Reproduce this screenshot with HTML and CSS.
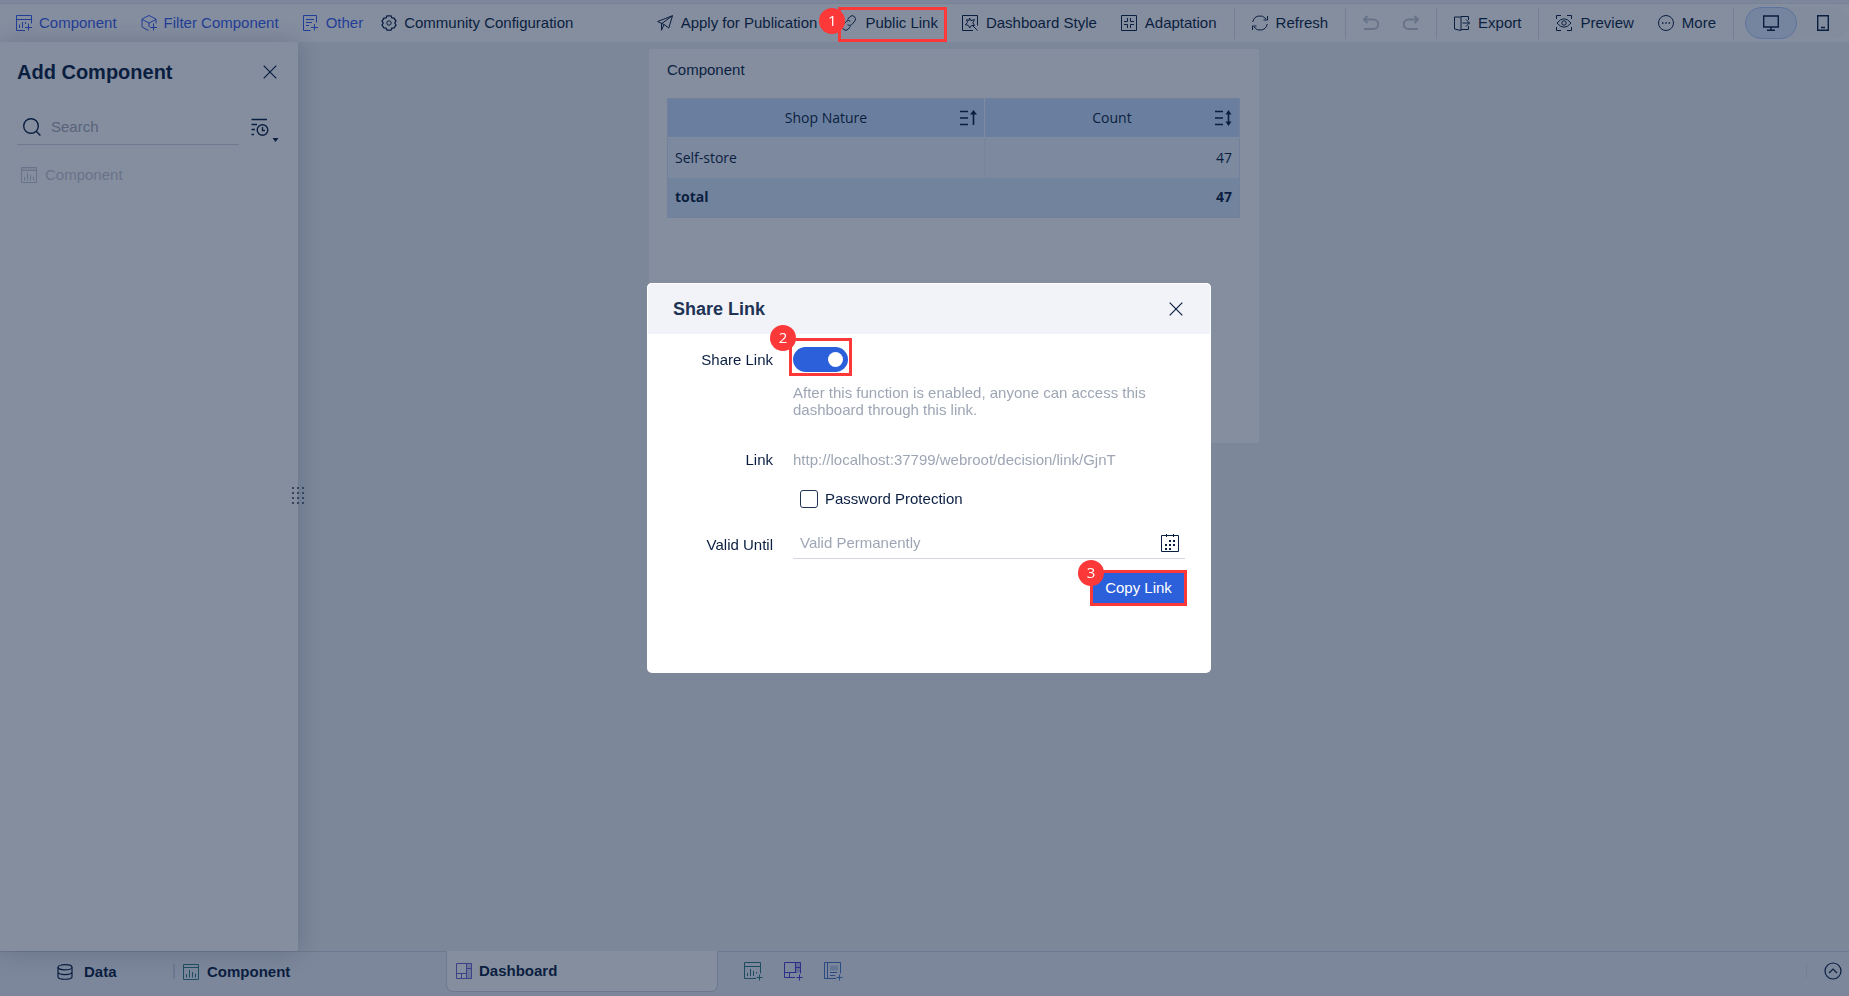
FILE: index.html
```html
<!DOCTYPE html>
<html lang="en">
<head>
<meta charset="utf-8">
<title>Dashboard</title>
<link rel="stylesheet" href="styles.css">
</head>
<body>
<div class="app">
  <div class="strip"></div>
  <header class="toolbar">
    <div class="group">
      <button class="tool blue"><svg class="icon" viewBox="0 0 16 16"><path d="M9 15.500H.5V.5h15v8M.5 4.500h15M3.500 13V9.500M6.500 13V7M9.500 9V7M12.500 8.500v7M9 12.500h7"/></svg>Component</button>
      <button class="tool blue"><svg class="icon" viewBox="0 0 16 16"><path d="M7.500 15.500L1 12V4L8 .5 15 4v4.500M1 4.500L8 8l7-3.500M8 8v4M12.500 8.500v7M9 12.500h7"/></svg>Filter Component</button>
      <button class="tool blue last"><svg class="icon" viewBox="0 0 16 16"><path d="M7.500 15.500H.5V.5h13v7M3 4.500h8M3 7.500h6M3 10.500h3M11.500 9v6.500M8 12.500h7"/></svg>Other</button>
      <button class="tool last"><svg class="icon" viewBox="0 0 16 16"><path stroke-width="1.300" d="M6 .8h4l.9 2 2.200.3 1.900 3-1.200 1.900L15 10l-1.900 2.900-2.200.3-.9 2H6l-.9-2-2.200-.3L1 10l1.200-2L1 6.100l1.900-3 2.200-.3z"/><circle cx="8" cy="8" r="2.200"/></svg>Community Configuration</button>
    </div>
    <div class="group">
      <button class="tool"><svg class="icon" viewBox="0 0 16 16"><path d="M.7 6.500L15.500.7 11.800 13 7 9.500zM15.500.7L4.500 8.700v6.500L7 9.500"/></svg>Apply for Publication</button>
      <button class="tool"><svg class="icon" viewBox="0 0 16 16"><path d="M6.500 4.500l2.300-2.700a3.300 3.300 0 0 1 5 4.300l-3 3.400a3 3 0 0 1-4.200.2M9.500 11.500l-2.300 2.700a3.300 3.300 0 0 1-5-4.300l3-3.400a3 3 0 0 1 4.200-.2"/></svg>Public Link<span class="frame frame-link"><span class="mark">1</span></span></button>
      <button class="tool"><svg class="icon" viewBox="0 0 16 16"><path d="M11 15.500H.5V.5h15v10M7.500 3l1.300 2.600 3.700-1-1.700 3.200 1.700 2.700-3.200.1-1.500 2.400-1.500-2.700-3-.6 2.200-2.100-.8-3 2.400.9zM11 11l4.500 4.500"/></svg>Dashboard Style</button>
      <button class="tool last"><svg class="icon" viewBox="0 0 16 16"><path d="M.5.5h15v15H.5zM6.500 3v3.500H3M9.500 3v3.500H13M6.500 13V9.500H3M9.500 13V9.500H13"/></svg>Adaptation</button>
      <span class="sep"></span>
      <button class="tool solo"><svg class="icon" viewBox="0 0 16 16"><path d="M.8 7A7.300 7.300 0 0 1 14 4M15.200 9A7.300 7.300 0 0 1 2 12M15.500 1v4h-4M.5 15v-4h4"/></svg>Refresh</button>
      <span class="sep"></span>
      <button class="tool faded first" aria-label="Undo"><svg class="icon thick" viewBox="0 0 16 16"><path d="M4.500 1L1 4.500 4.500 8M1 4.500h9.500a4.500 4.500 0 0 1 0 9.500H1"/></svg></button>
      <button class="tool faded last" aria-label="Redo"><svg class="icon thick" viewBox="0 0 16 16"><path d="M11.500 1L15 4.500 11.500 8M15 4.500H5.500a4.500 4.500 0 0 0 0 9.500H15"/></svg></button>
      <span class="sep"></span>
      <button class="tool solo"><svg class="icon" viewBox="0 0 16 16"><path d="M7 2H.5v12L7 15.500zM7 1.500h7.500V5M7 14.500h7.500V11M8.500 8h7M12 4.500L15.500 8 12 11.500"/></svg>Export</button>
      <span class="sep"></span>
      <button class="tool first"><svg class="icon" viewBox="0 0 16 16"><path d="M.5 4V.5H5M11 .5h4.500V4M.5 12v3.500H5M11 15.500h4.500V12M1 8q7-8.500 14 0-7 8.500-14 0z"/><circle cx="8" cy="8" r="2.200"/></svg>Preview</button>
      <button class="tool last"><svg class="icon" viewBox="0 0 16 16"><circle cx="8" cy="8" r="7.500"/><path class="dots" d="M4 7.300h1.500v1.500H4zM7.300 7.300h1.500v1.500H7.300zM10.600 7.300h1.500v1.500h-1.500z"/></svg>More</button>
      <span class="sep"></span>
      <div class="switcher">
        <button class="device active" aria-label="Desktop"><svg class="icon bold" viewBox="0 0 16 16"><path d="M.7 1h14.600v11H.7zM8 12v3M4 15.200h8"/></svg></button>
        <button class="device" aria-label="Mobile"><svg class="icon bold" viewBox="0 0 16 16"><path d="M2.700.7h10.600v14.600H2.700zM6 12.500h4"/></svg></button>
      </div>
    </div>
  </header>

  <main class="workspace">
    <aside class="sidebar">
      <div class="side-head">
        <h2 class="side-title">Add Component</h2>
        <button class="close" aria-label="Close panel"><svg class="cross" viewBox="0 0 14 14"><path d="M.7.7l12.600 12.600M13.300.7L.7 13.300"/></svg></button>
      </div>
      <div class="search-row">
        <label class="search"><svg class="lens" viewBox="0 0 18 18"><circle cx="8" cy="8" r="7.300"/><path d="M13.200 13.200l4.200 4.200"/></svg><input class="search-input" type="text" placeholder="Search" aria-label="Search"></label>
        <button class="sort" aria-label="Sort by time"><svg class="sort-icon" viewBox="0 0 28 24"><path d="M.5 1.500H16M.5 6.500H6M.5 11.500H4M.5 16.500H3"/><circle cx="11.500" cy="12" r="5.300"/><path d="M11.500 9v3.500H14"/><path class="fill" d="M21.500 20h6l-3 4z"/></svg></button>
      </div>
      <div class="item"><svg class="icon" viewBox="0 0 16 16"><path class="tint" d="M.5.5h15v3H.5z"/><path d="M.5.5h15v15H.5zM.5 3.500h15M3.500 13.500V10M6.500 13.500V6M9.500 13.500V8M12.500 13.500v-4"/></svg>Component</div>
      <svg class="grip" viewBox="0 0 12 18"><path d="M0 1h2M5 1h2M10 1h2M0 6h2M5 6h2M10 6h2M0 11h2M5 11h2M10 11h2M0 16h2M5 16h2M10 16h2"/></svg>
    </aside>
    <section class="canvas">
      <article class="card">
        <h3 class="card-title">Component</h3>
        <table class="data">
          <colgroup><col class="col-name"><col></colgroup>
          <thead>
            <tr>
              <th>Shop Nature<svg class="order" viewBox="0 0 17 16"><path d="M0 1.500h8M0 8h8M0 14.500h8M13.500 15V3"/><path class="fill" d="M10 4.500L13.500 0 17 4.500z"/></svg></th>
              <th>Count<svg class="order" viewBox="0 0 17 16"><path d="M0 1.500h8M0 8h8M0 14.500h8M13.500 13V3"/><path class="fill" d="M10.500 4.500l3-4.500 3 4.500zM10.500 11.500l3 4.500 3-4.500z"/></svg></th>
            </tr>
          </thead>
          <tbody>
            <tr><td>Self-store</td><td class="num">47</td></tr>
            <tr class="total"><td>total</td><td class="num">47</td></tr>
          </tbody>
        </table>
      </article>
    </section>
  </main>

  <footer class="tabs">
    <button class="tab tab-data"><svg class="icon" viewBox="0 0 16 16"><g stroke-width="1.200"><ellipse cx="8" cy="3.300" rx="7" ry="2.600"/><path d="M1 3.300v9.400c0 3.400 14 3.400 14 0V3.300M1 8c0 3.400 14 3.400 14 0"/></g></svg>Data</button>
    <button class="tab tab-component"><svg class="icon teal" viewBox="0 0 16 16"><path d="M.5.5h15v15H.5zM.5 3.500h15M3.500 13.500V10M6.500 13.500V6M9.500 13.500V8M12.500 13.500v-4"/></svg>Component</button>
    <button class="tab tab-dashboard"><svg class="icon violet" viewBox="0 0 16 16"><path class="tint" d="M10.500.5h5v15h-5z"/><path d="M.5.5h15v15H.5zM.5 10.500h10M10.500.5v15M10.500 5.500h5M5.500 10.500v5"/></svg>Dashboard</button>
    <div class="adders">
      <button class="add" aria-label="Add component"><svg class="add-icon teal" viewBox="0 0 19 19"><path d="M12 16.500H.5V.5h16v11M.5 4.500h16M3.500 14v-3M6.500 14V7M9.500 14V9M12.500 11.500V10M15.500 12.500v6M12.500 15.500h6"/></svg></button>
      <button class="add" aria-label="Add dashboard"><svg class="add-icon indigo" viewBox="0 0 19 19"><path class="tint" d="M11.500.5h5v10h-5z"/><path d="M11 15.500H.5V.5h16v11M.5 10.500h12M11.500.5v10M11.500 5.500h5M5.500 10.500v5M15.500 12.500v6M12.500 15.500h6"/></svg></button>
      <button class="add" aria-label="Add report"><svg class="add-icon steel" viewBox="0 0 19 19"><path class="tint" d="M6 3.500h8v5H6z"/><path d="M12 16.500H.5V.5h16v11M3.500.5v16M6 10.500h7M6 13.500h5M15.500 12.500v6M12.500 15.500h6"/></svg></button>
    </div>
    <button class="expand" aria-label="Expand"><svg class="expand-icon" viewBox="0 0 18 18"><circle cx="9" cy="9" r="8"/><path d="M5 11l4-4 4 4"/></svg></button>
  </footer>
</div>

<div class="backdrop">
  <section class="dialog" role="dialog" aria-labelledby="dialog-title">
    <header class="dialog-head">
      <h1 class="dialog-title" id="dialog-title">Share Link</h1>
      <button class="close" aria-label="Close dialog"><svg class="cross" viewBox="0 0 14 14"><path d="M.7.7l12.600 12.600M13.300.7L.7 13.300"/></svg></button>
    </header>
    <div class="form">
      <label class="label" for="share">Share Link</label>
      <div class="field"><span class="toggle-wrap"><input class="toggle" id="share" type="checkbox" role="switch" checked><span class="frame frame-toggle"><span class="mark">2</span></span></span></div>
      <p class="help">After this function is enabled, anyone can access this dashboard through this link.</p>
      <span class="label">Link</span>
      <span class="url">http://localhost:37799/webroot/decision/link/GjnT</span>
      <label class="check"><input class="box" type="checkbox">Password Protection</label>
      <label class="label label-date" for="valid">Valid Until</label>
      <div class="date"><input class="date-input" id="valid" type="text" placeholder="Valid Permanently"><svg class="calendar" viewBox="0 0 18 18"><path d="M.5 1.500h17v16H.5zM5.500 0v3M12.500 0v3"/><path class="fill" d="M8 6h2v2H8zM12 6h2v2h-2zM4 10h2v2H4zM8 10h2v2H8zM12 10h2v2h-2zM4 14h2v2H4zM8 14h2v2H8z"/></svg></div>
      <div class="actions"><button class="copy">Copy Link<span class="frame frame-copy"><span class="mark">3</span></span></button></div>
    </div>
  </section>
</div>
</body>
</html>
```
FILE: styles.css
```css
* { box-sizing: border-box; }
html, body { height: 100%; }
body {
  margin: 0;
  font: 15px/18px "Liberation Sans", Arial, sans-serif;
  color: #091e40;
  overflow: hidden;
}
button {
  font: inherit;
  color: inherit;
  background: none;
  border: 0;
  padding: 0;
}
input { font: inherit; color: inherit; }
svg { fill: none; stroke: currentColor; flex: none; display: block; }
svg .fill, svg .dots { fill: currentColor; stroke: none; }
svg .tint { fill: currentColor; fill-opacity: 0.3; stroke: none; }
.icon { width: 16px; height: 16px; }
.bold { stroke-width: 1.4; }
.thick { stroke-width: 2; }

.app {
  height: 100%;
  display: grid;
  grid-template-rows: 4px 38px 1fr 45px;
}
.strip { background: #edf0f6; border-bottom: 1px solid #e4e8ef; }

.toolbar {
  display: flex;
  justify-content: space-between;
  align-items: center;
  padding-left: 4px;
  background: #fff;
}
.group { display: flex; align-items: center; }
.tool {
  position: relative;
  display: flex;
  align-items: center;
  gap: 7px;
  height: 31px;
  padding: 0 12px;
  white-space: nowrap;
}
.group + .group .tool { gap: 8px; }
.tool.last { padding-right: 6px; }
.tool.first, .tool.solo { padding-left: 6px; }
.tool.solo { padding-right: 6px; }
.blue { color: #3a5eec; }
.faded { color: #c3c9d2; }
.sep { width: 1px; height: 31px; margin: 0 11px; background: #dde1e8; }
.switcher { display: flex; background: #f9fafb; border-radius: 16px; }
.device {
  width: 52px;
  height: 32px;
  display: flex;
  align-items: center;
  justify-content: center;
  border-radius: 16px;
}
.device.active { background: #dfecff; border: 1px solid #b3cbfa; }

.workspace { display: flex; min-height: 0; background: #eef1f5; }
.sidebar {
  position: relative;
  width: 298px;
  flex: none;
  padding: 17px 19px 0 17px;
  background: #fff;
  box-shadow: 0 0 24px rgba(9, 30, 64, 0.22);
}
.side-head { display: flex; justify-content: space-between; align-items: center; padding-right: 2px; }
.side-title { margin: 0; font-size: 20px; line-height: 26px; }
.close { display: flex; }
.cross { width: 14px; height: 14px; stroke-width: 1.2; }
.search-row { display: flex; align-items: center; gap: 12px; margin-top: 24px; }
.search {
  flex: 1;
  display: flex;
  align-items: center;
  gap: 10px;
  height: 36px;
  padding-left: 6px;
  border-bottom: 1px solid #d0d6e0;
}
.lens { width: 18px; height: 18px; stroke-width: 1.4; }
.search-input { width: 100%; min-width: 0; border: 0; padding: 0; outline: 0; background: none; }
.search-input::placeholder { color: #a3aab6; opacity: 1; }
.sort { padding-top: 6px; }
.sort-icon { width: 28px; height: 24px; stroke-width: 1.4; }
.item {
  display: flex;
  align-items: center;
  gap: 8px;
  margin-top: 21px;
  padding-left: 4px;
  color: #c3c9d2;
}
.grip {
  position: absolute;
  right: -6px;
  top: 49%;
  width: 12px;
  height: 18px;
  stroke-width: 2;
  color: #5c6a82;
}

.canvas { flex: 1; min-width: 0; display: flex; padding: 7px 0 0 351px; align-items: flex-start; }
.card { width: 610px; min-height: 394px; padding: 12px 19px 12px 18px; background: #fff; }
.card-title { margin: 0; font-size: 15px; font-weight: 400; line-height: 18px; }
.data {
  width: 100%;
  margin-top: 19px;
  table-layout: fixed;
  border-collapse: collapse;
  font: 14px/20px "Open Sans", "Noto Sans", sans-serif;
  border: 1px solid #d7e4f6;
}
.col-name { width: 317px; }
.data th, .data td { height: 40px; padding: 0 7px; }
.data th {
  position: relative;
  height: 39px;
  font-weight: 400;
  background: #c9e0fe;
  border-bottom: 1px solid #f4f8ff;
}
.data th + th { border-left: 1px solid #f4f8ff; }
.data td { background: #eff4fe; }
.data td + td { border-left: 1px solid #e4eaf6; }
.data .total td { background: #d9e9fa; font-weight: 700; border-color: #d9e9fa; }
.data .num { text-align: right; }
.order { position: absolute; right: 7px; top: 11px; width: 17px; height: 16px; stroke-width: 1.6; }

.tabs {
  display: flex;
  align-items: flex-start;
  background: #edf0f6;
  box-shadow: inset 0 1px #cdd4e0;
}
.tab { display: flex; align-items: center; gap: 7px; height: 41px; font-weight: 700; }
.tab-data { width: 173px; gap: 11px; padding-left: 57px; }
.tab-component { width: 273px; gap: 8px; }
.tab-component::before { content: ""; width: 2px; height: 15px; background: #cdd4e0; }
.tab-dashboard {
  width: 272px;
  padding-left: 9px;
  background: #fff;
  border: 1px solid #cdd4e0;
  border-top: 0;
  border-radius: 0 0 7px 7px;
}
.teal { color: #2f7a80; }
.violet { color: #6a66d0; }
.indigo { color: #4a41cf; }
.steel { color: #4d76c4; }
.adders { display: flex; align-items: center; gap: 21px; height: 41px; padding-left: 26px; }
.add-icon { width: 19px; height: 19px; }
.expand { display: flex; align-items: center; gap: 17px; height: 39px; margin-left: auto; padding-right: 7px; }
.expand::before { content: ""; width: 1px; height: 15px; background: #dde1e8; }
.expand-icon { width: 18px; height: 18px; stroke-width: 1.2; }

.backdrop {
  position: fixed;
  inset: 0;
  z-index: 10;
  display: flex;
  align-items: center;
  justify-content: center;
  padding: 0 0 40px 9px;
  background: rgba(11, 30, 64, 0.5);
}
.dialog { width: 564px; min-height: 390px; background: #fff; border-radius: 5px; }
.dialog-head {
  display: flex;
  align-items: center;
  justify-content: space-between;
  height: 51px;
  padding: 0 27px 0 25px;
  background: #f2f3f8;
  border: 1px solid #fff;
  border-bottom: 0;
  border-radius: 5px 5px 0 0;
}
.dialog-title { margin: 0; font-size: 18px; line-height: 22px; color: #1f3355; }
.form {
  display: grid;
  grid-template-columns: 126px 1fr;
  column-gap: 20px;
  align-items: center;
  padding: 13px 26px 0 0;
}
.label { text-align: right; }
.label-date { padding-top: 3px; }
.field { display: flex; }
.toggle-wrap { position: relative; display: flex; }
.toggle {
  appearance: none;
  width: 55px;
  height: 25px;
  margin: 0;
  padding: 5px;
  display: flex;
  justify-content: flex-end;
  background: #2c60db;
  border-radius: 13px;
}
.toggle::before { content: ""; width: 15px; height: 15px; border-radius: 50%; background: #fff; }
.help, .url, .check, .actions { grid-column: 2; }
.help { margin: 12px 20px 33px 0; line-height: 17px; color: #9ea6b5; }
.url { color: #9ea6b5; }
.check { display: flex; align-items: center; gap: 7px; margin: 21px 0 20px 7px; }
.box {
  appearance: none;
  width: 18px;
  height: 18px;
  margin: 0;
  border: 1px solid #1f3355;
  border-radius: 3px;
}
.date {
  display: flex;
  align-items: center;
  height: 31px;
  padding: 0 6px 0 7px;
  border-bottom: 1px solid #d3d7de;
}
.date-input { flex: 1; min-width: 0; border: 0; padding: 0; outline: 0; }
.date-input::placeholder { color: #9ea6b5; opacity: 1; }
.calendar { width: 18px; height: 18px; }
.actions { display: flex; justify-content: flex-end; padding: 14px 1px 0 0; }
.copy { position: relative; width: 91px; height: 30px; background: #2c60db; color: #fff; }

.frame { position: absolute; z-index: 20; border: 3px solid #fc3838; pointer-events: none; }
.frame-link { inset: -1px 3px -3px 9px; }
.frame-toggle { inset: -9px -4px -4px; }
.frame-copy { inset: -3px; }
.mark {
  position: absolute;
  left: -22px;
  top: -16px;
  width: 26px;
  height: 26px;
  border-radius: 50%;
  background: #fc3838;
  color: #fff;
  font: 15px/24px "Open Sans", "Noto Sans", sans-serif;
  text-align: center;
}
.frame-link .mark { top: -2px; }
.frame-copy .mark { left: -15px; top: -13px; }
```
